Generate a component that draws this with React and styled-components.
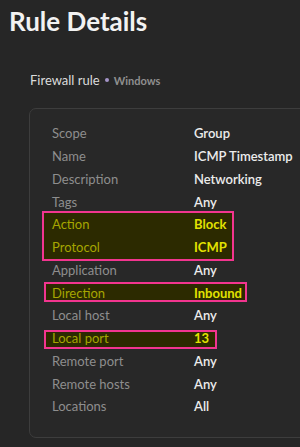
import React from 'react'
import styled, { createGlobalStyle } from 'styled-components'

const GlobalStyle = createGlobalStyle`
  html, body {
    margin: 0;
    padding: 0;
    background: #262626;
    overflow: hidden;
  }
  body {
    font-family: Lato, "Open Sans", sans-serif;
    color: #e6e6e6;
  }
`

const Page = styled.div`
  padding: 5px 0 0 9px;
  width: 291px;
  height: 442px;
  overflow: hidden;
`

const Title = styled.h1`
  margin: 0;
  font-size: 26px;
  font-weight: 700;
  line-height: 33px;
  color: #f2f2f2;
`

const Subtitle = styled.div`
  display: flex;
  align-items: center;
  gap: 5px;
  margin: 34px 0 0 21px;
  height: 16px;
  font-size: 13px;
  color: #dcdcdc;
`

const Dot = styled.span`
  width: 4px;
  height: 4px;
  border-radius: 50%;
  background: #a494c8;
`

const Platform = styled.span`
  font-size: 11px;
  font-weight: 700;
  color: #8f8f8f;
`

const Card = styled.section`
  margin: 20px 0 0 20px;
  width: 300px;
  box-sizing: border-box;
  padding: 13px 0 0 22px;
  height: 330px;
  background: #282828;
  border: 1px solid #3d3d3d;
  border-radius: 7px;
`

const Row = styled.div`
  position: relative;
  z-index: 1;
  display: grid;
  grid-template-columns: 142px auto;
  height: 22.75px;
  align-items: center;
  font-size: 13px;
`

const Label = styled.span`
  color: ${(p) => (p.$hot ? '#a6a600' : '#8e8e8e')};
`

const Value = styled.span`
  font-weight: ${(p) => (p.$hot ? 700 : 600)};
  color: ${(p) => (p.$hot ? '#e2e200' : '#ececec')};
`

const Highlight = styled.div`
  position: relative;

  &::before {
    content: '';
    position: absolute;
    z-index: 0;
    left: ${(p) => p.$left}px;
    top: ${(p) => p.$top}px;
    bottom: ${(p) => p.$bottom}px;
    width: ${(p) => p.$width}px;
    box-sizing: border-box;
    background: #2c2a00;
    border: 2px solid #f2358f;
  }
`

const rules = [
  { label: 'Scope', value: 'Group' },
  { label: 'Name', value: 'ICMP Timestamp' },
  { label: 'Description', value: 'Networking' },
  { label: 'Tags', value: 'Any' },
  {
    box: { left: -10, top: -2, bottom: -2, width: 192 },
    rows: [
      { label: 'Action', value: 'Block' },
      { label: 'Protocol', value: 'ICMP' },
    ],
  },
  { label: 'Application', value: 'Any' },
  {
    box: { left: -8, top: 1, bottom: 2, width: 203 },
    rows: [{ label: 'Direction', value: 'Inbound' }],
  },
  { label: 'Local host', value: 'Any' },
  {
    box: { left: -8, top: 3, bottom: 1, width: 173 },
    rows: [{ label: 'Local port', value: '13' }],
  },
  { label: 'Remote port', value: 'Any' },
  { label: 'Remote hosts', value: 'Any' },
  { label: 'Locations', value: 'All' },
]

const RuleRow = ({ label, value, hot }) => (
  <Row>
    <Label $hot={hot}>{label}</Label>
    <Value $hot={hot}>{value}</Value>
  </Row>
)

export default function App() {
  return (
    <Page>
      <GlobalStyle />
      <Title>Rule Details</Title>
      <Subtitle>
        Firewall rule <Dot /> <Platform>Windows</Platform>
      </Subtitle>
      <Card>
        {rules.map((r, i) =>
          r.box ? (
            <Highlight
              key={i}
              $left={r.box.left}
              $top={r.box.top}
              $bottom={r.box.bottom}
              $width={r.box.width}
            >
              {r.rows.map((row) => (
                <RuleRow key={row.label} {...row} hot />
              ))}
            </Highlight>
          ) : (
            <RuleRow key={r.label} {...r} />
          )
        )}
      </Card>
    </Page>
  )
}
